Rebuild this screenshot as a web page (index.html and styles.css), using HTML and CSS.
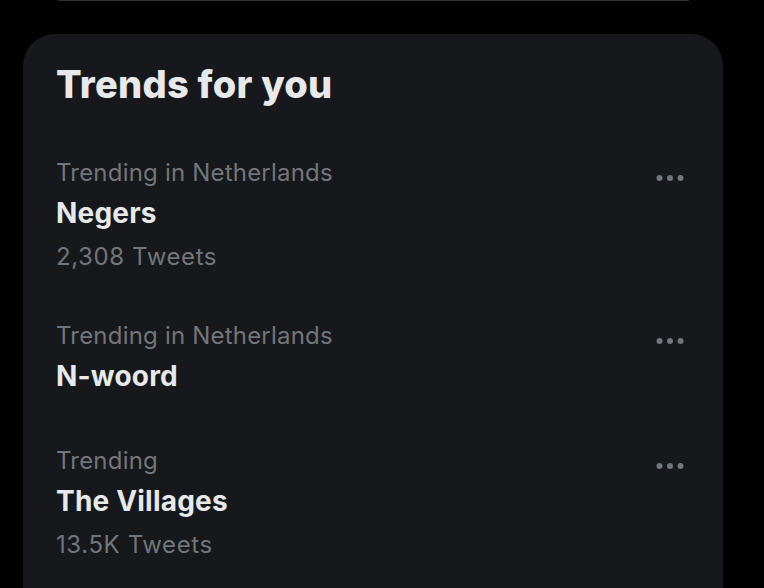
FILE: index.html
```html
<!DOCTYPE html>
<html lang="en">
<head>
<meta charset="utf-8">
<title>Trends for you</title>
<link rel="stylesheet" href="styles.css">
</head>
<body>
<div class="sidebar">
  <div class="search-edge"></div>
  <section class="card">
    <h2 class="card-title">Trends for you</h2>
    <div class="trend">
      <div class="trend-body">
        <div class="trend-meta">Trending in Netherlands</div>
        <div class="trend-name">Negers</div>
        <div class="trend-count">2,308 Tweets</div>
      </div>
      <div class="more">
        <svg viewBox="0 0 24 24" width="36" height="36"><circle cx="5" cy="12" r="2"/><circle cx="12" cy="12" r="2"/><circle cx="19" cy="12" r="2"/></svg>
      </div>
    </div>
    <div class="trend">
      <div class="trend-body">
        <div class="trend-meta">Trending in Netherlands</div>
        <div class="trend-name">N-woord</div>
      </div>
      <div class="more">
        <svg viewBox="0 0 24 24" width="36" height="36"><circle cx="5" cy="12" r="2"/><circle cx="12" cy="12" r="2"/><circle cx="19" cy="12" r="2"/></svg>
      </div>
    </div>
    <div class="trend">
      <div class="trend-body">
        <div class="trend-meta">Trending</div>
        <div class="trend-name">The Villages</div>
        <div class="trend-count">13.5K Tweets</div>
      </div>
      <div class="more">
        <svg viewBox="0 0 24 24" width="36" height="36"><circle cx="5" cy="12" r="2"/><circle cx="12" cy="12" r="2"/><circle cx="19" cy="12" r="2"/></svg>
      </div>
    </div>
  </section>
</div>
</body>
</html>
```
FILE: styles.css
```css
html, body {
  margin: 0;
  padding: 0;
  background: #000;
}
body {
  font-family: Inter, "Noto Sans", sans-serif;
  color: #e7e9ea;
  overflow: hidden;
}
.sidebar {
  width: 700px;
  margin-left: 23px;
}
.search-edge {
  height: 1px;
  margin: 0 34px 0 35px;
  background: #2f3336;
  border-radius: 0 0 1px 1px;
}
.card {
  margin-top: 33px;
  background: #16181c;
  border-radius: 32px;
  height: 640px;
}
.card-title {
  margin: 0;
  padding: 27px 34px 27px 33px;
  font-size: 38px;
  line-height: 46px;
  font-weight: 800;
  letter-spacing: 0.25px;
}
.trend {
  display: flex;
  align-items: flex-start;
  padding: 23px 35px 24px 33px;
}
.trend-body {
  flex: 1;
  display: flex;
  flex-direction: column;
}
.trend-meta {
  font-size: 24px;
  line-height: 32px;
  color: #71767b;
  letter-spacing: 0.2px;
}
.trend-name {
  margin-top: 2px;
  font-size: 28px;
  line-height: 44px;
  font-weight: 700;
  letter-spacing: 0.2px;
}
.trend-count {
  margin-top: 6px;
  font-size: 24px;
  line-height: 32px;
  color: #71767b;
  letter-spacing: 0.6px;
}
.more {
  width: 36px;
  height: 36px;
  margin-top: 3px;
}
.more svg {
  display: block;
  fill: #71767b;
}
```
